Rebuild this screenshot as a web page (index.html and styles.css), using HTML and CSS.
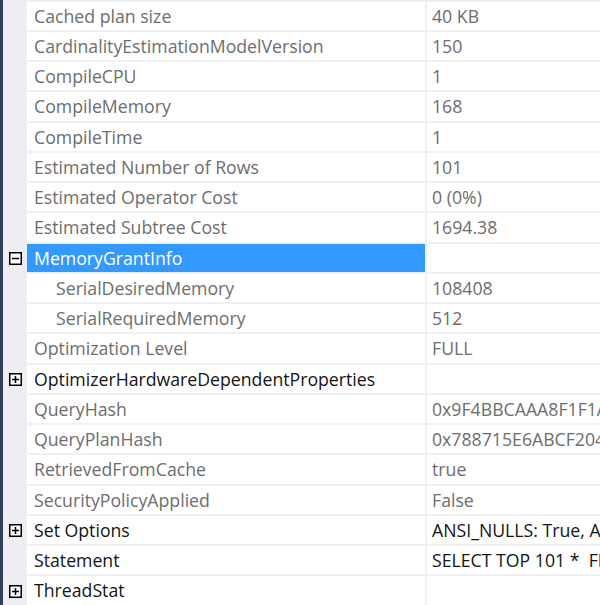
FILE: index.html
```html
<!DOCTYPE html>
<html>
<head>
<meta charset="utf-8">
<link rel="stylesheet" href="styles.css">
</head>
<body>
<div class="grid">
  <div class="row"><div class="gut"></div><div class="name ro">Cached plan size</div><div class="val ro">40 KB</div></div>
  <div class="row"><div class="gut"></div><div class="name ro">CardinalityEstimationModelVersion</div><div class="val ro">150</div></div>
  <div class="row"><div class="gut"></div><div class="name ro">CompileCPU</div><div class="val ro">1</div></div>
  <div class="row"><div class="gut"></div><div class="name ro">CompileMemory</div><div class="val ro">168</div></div>
  <div class="row"><div class="gut"></div><div class="name ro">CompileTime</div><div class="val ro">1</div></div>
  <div class="row"><div class="gut"></div><div class="name ro">Estimated Number of Rows</div><div class="val ro">101</div></div>
  <div class="row"><div class="gut"></div><div class="name ro">Estimated Operator Cost</div><div class="val ro">0 (0%)</div></div>
  <div class="row"><div class="gut"></div><div class="name ro">Estimated Subtree Cost</div><div class="val ro">1694.38</div></div>
  <div class="row"><div class="gut"><svg class="box" width="13" height="13" viewBox="0 0 13 13"><rect x="0.75" y="0.75" width="11.5" height="11.5" fill="#fff" stroke="#000" stroke-width="1.5"/><rect x="3" y="5.75" width="7" height="1.5" fill="#000"/></svg></div><div class="name sel">MemoryGrantInfo</div><div class="val ro"></div></div>
  <div class="row"><div class="gut"></div><div class="name ro child">SerialDesiredMemory</div><div class="val ro">108408</div></div>
  <div class="row"><div class="gut"></div><div class="name ro child">SerialRequiredMemory</div><div class="val ro">512</div></div>
  <div class="row"><div class="gut"></div><div class="name ro">Optimization Level</div><div class="val ro">FULL</div></div>
  <div class="row"><div class="gut"><svg class="box" width="13" height="13" viewBox="0 0 13 13"><rect x="0.75" y="0.75" width="11.5" height="11.5" fill="#fff" stroke="#000" stroke-width="1.5"/><rect x="3" y="5.75" width="7" height="1.5" fill="#000"/><rect x="5.75" y="3" width="1.5" height="7" fill="#000"/></svg></div><div class="name rw">OptimizerHardwareDependentProperties</div><div class="val rw"></div></div>
  <div class="row"><div class="gut"></div><div class="name ro">QueryHash</div><div class="val ro">0x9F4BBCAAA8F1F1A5E</div></div>
  <div class="row"><div class="gut"></div><div class="name ro">QueryPlanHash</div><div class="val ro">0x788715E6ABCF2041C</div></div>
  <div class="row"><div class="gut"></div><div class="name ro">RetrievedFromCache</div><div class="val ro">true</div></div>
  <div class="row"><div class="gut"></div><div class="name ro">SecurityPolicyApplied</div><div class="val ro">False</div></div>
  <div class="row"><div class="gut"><svg class="box" width="13" height="13" viewBox="0 0 13 13"><rect x="0.75" y="0.75" width="11.5" height="11.5" fill="#fff" stroke="#000" stroke-width="1.5"/><rect x="3" y="5.75" width="7" height="1.5" fill="#000"/><rect x="5.75" y="3" width="1.5" height="7" fill="#000"/></svg></div><div class="name rw">Set Options</div><div class="val rw">ANSI_NULLS: True, ANSI_PADDING: True</div></div>
  <div class="row"><div class="gut"></div><div class="name rw">Statement</div><div class="val rw">SELECT TOP 101 *  FROM [dbo].[Posts]</div></div>
  <div class="row"><div class="gut"><svg class="box" width="13" height="13" viewBox="0 0 13 13"><rect x="0.75" y="0.75" width="11.5" height="11.5" fill="#fff" stroke="#000" stroke-width="1.5"/><rect x="3" y="5.75" width="7" height="1.5" fill="#000"/><rect x="5.75" y="3" width="1.5" height="7" fill="#000"/></svg></div><div class="name rw">ThreadStat</div><div class="val rw"></div></div>
</div>
</body>
</html>
```
FILE: styles.css
```css
html, body {
  margin: 0;
  padding: 0;
  width: 600px;
  height: 605px;
  overflow: hidden;
  background: #fff;
}
body {
  font-family: "Open Sans", "Noto Sans", sans-serif;
  font-size: 17.7px;
}
.grid {
  border-left: 3px solid #34405f;
  padding-top: 1.5px;
  background: #eeeef2;
  min-height: 605px;
  box-sizing: border-box;
}
.row {
  display: grid;
  grid-template-columns: 24px 398px 1fr;
  height: 30.25px;
}
.gut {
  background: #eeeef2;
  display: flex;
  align-items: center;
  justify-content: center;
  padding-left: 1px;
}
.box {
  display: block;
}
.name, .val {
  background: #fff;
  border-bottom: 2px solid #f0f0f2;
  display: flex;
  align-items: center;
  white-space: pre;
  overflow: hidden;
  box-sizing: border-box;
}
.name {
  padding-left: 7px;
}
.name.child {
  padding-left: 29px;
}
.val {
  border-left: 2px solid #f0f0f2;
  padding-left: 5px;
}
.ro {
  color: #6d6d6d;
}
.rw {
  color: #141414;
}
.name.sel {
  background: #3399ff;
  color: #fff;
}
```
